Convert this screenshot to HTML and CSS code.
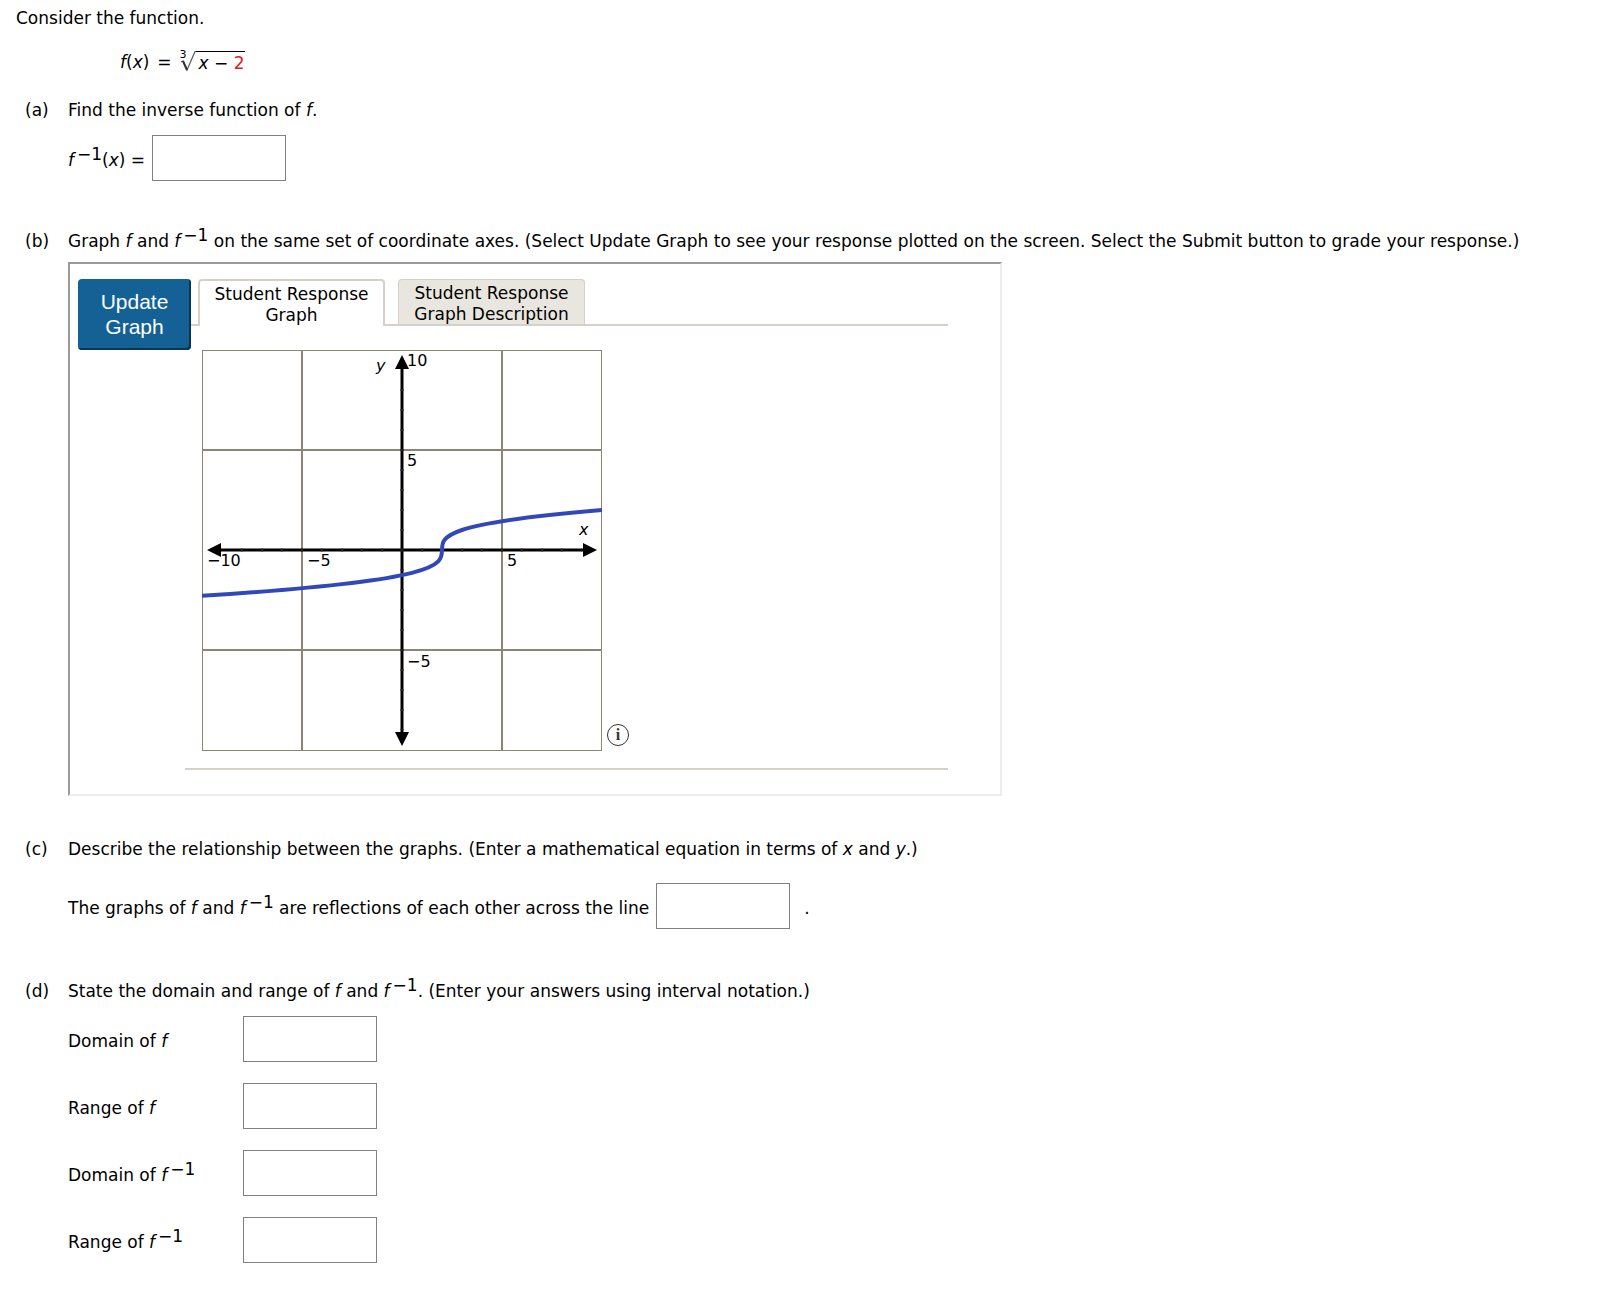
FILE: index.html
```
<!DOCTYPE html>
<html lang="en">
<head>
    <meta charset="UTF-8">
    <meta name="viewport" content="width=device-width, initial-scale=1.0">
    <title>Inverse Functions</title>
    <link rel="stylesheet" href="styles.css">
</head>
<body>
    <main class="question">
        <p>Consider the function.</p>

        <div class="formula">
            <span><i>f</i>(<i>x</i>)</span>
            <span>=</span>
            <span class="root">
                <span class="root-index">3</span>
                <svg class="root-sign" width="16" height="22" viewBox="0 0 16 22">
                    <path d="M1 12l2-1 4 9L15 1.5h1" fill="none" stroke="#555" stroke-width="1.2"/>
                    <path d="M3 11l4 9" stroke="#333" stroke-width="2"/>
                </svg>
                <span class="radicand"><i>x</i> − <span class="red">2</span></span>
            </span>
        </div>

        <section class="part part-a">
            <span>(a)</span>
            <div>
                <p>Find the inverse function of <i>f</i>.</p>
                <div class="answer-line answer-a">
                    <label for="inverse"><i>f</i><sup>−1</sup>(<i>x</i>) =</label>
                    <input type="text" id="inverse" class="answer">
                </div>
            </div>
        </section>

        <section class="part part-b">
            <span>(b)</span>
            <div>
                <p>Graph <i>f</i> and <i>f</i><sup>−1</sup> on the same set of coordinate axes. (Select Update Graph to see your response plotted on the screen. Select the Submit button to grade your response.)</p>

                <div class="graph-frame">
                    <button type="button" class="update-button">Update Graph</button>
                    <div class="graph-panel">
                        <div class="tabs">
                            <button type="button" class="tab active">Student Response Graph</button>
                            <button type="button" class="tab">Student Response Graph Description</button>
                        </div>
                        <div class="graph-body">
                            <svg class="graph" width="400" height="401" viewBox="0 0 400 401">
                                <!-- grid -->
                                <g stroke="#8b8478" fill="none">
                                    <rect x="0.5" y="0.5" width="399" height="400"/>
                                    <path d="M100 0V400M300 0V400M0 100H400M0 300H400" stroke-width="2"/>
                                </g>
                                <!-- axes -->
                                <path d="M200 16V384M16 200H384" stroke="#000" stroke-width="3"/>
                                <path d="M200 39V380M39 200H380" stroke="#222" stroke-width="3" stroke-dasharray="2 18"/>
                                <path d="M200 5l7 14h-14zM200 396l7-14h-14zM5 200l14-7v14zM395 200l-14-7v14z"/>
                                <!-- x = 2 + t^3, y = t -->
                                <path d="M0 245.8C449.7 217.2 56.8 188.6 400 160" stroke="#3348b8" stroke-width="4" fill="none"/>
                                <g class="graph-labels">
                                    <text x="205" y="16">10</text>
                                    <text x="205" y="116">5</text>
                                    <text x="205" y="317">−5</text>
                                    <text x="5" y="216">−10</text>
                                    <text x="105" y="216">−5</text>
                                    <text x="305" y="216">5</text>
                                    <text x="174" y="21" font-style="italic">y</text>
                                    <text x="377" y="185" font-style="italic">x</text>
                                </g>
                            </svg>
                            <button type="button" class="info-button">i</button>
                        </div>
                    </div>
                </div>
            </div>
        </section>

        <section class="part part-c">
            <span>(c)</span>
            <div>
                <p>Describe the relationship between the graphs. (Enter a mathematical equation in terms of <i>x</i> and <i>y</i>.)</p>
                <div class="answer-line answer-c">
                    <label for="line">The graphs of <i>f</i> and <i>f</i><sup>−1</sup> are reflections of each other across the line</label>
                    <input type="text" id="line" class="answer">
                    <span class="period">.</span>
                </div>
            </div>
        </section>

        <section class="part part-d">
            <span>(d)</span>
            <div>
                <p>State the domain and range of <i>f</i> and <i>f</i><sup>−1</sup>. (Enter your answers using interval notation.)</p>
                <div class="intervals">
                    <label for="domain-f">Domain of <i>f</i></label>
                    <input type="text" id="domain-f" class="answer">
                    <label for="range-f">Range of <i>f</i></label>
                    <input type="text" id="range-f" class="answer">
                    <label for="domain-inverse">Domain of <i>f</i><sup>−1</sup></label>
                    <input type="text" id="domain-inverse" class="answer">
                    <label for="range-inverse">Range of <i>f</i><sup>−1</sup></label>
                    <input type="text" id="range-inverse" class="answer">
                </div>
            </div>
        </section>
    </main>
</body>
</html>
```

FILE: styles.css
```
:root {
    --text-color: #000;
    --button-color: #146196;
    --tab-border: #d5d1ca;
    --tab-background: #e9e6df;
    --input-border: #808080;
}

* {
    margin: 0;
    padding: 0;
    box-sizing: border-box;
}

body {
    background: #fff;
    color: var(--text-color);
    font-family: Verdana, "DejaVu Sans", sans-serif;
    font-size: 17px;
    line-height: 20px;
}

.question {
    padding: 8px 16px;
}

sup {
    margin-left: 3px;
    font-size: 17px;
    line-height: 0;
    vertical-align: 6px;
}

/* function definition */
.formula {
    display: flex;
    gap: 8px;
    margin: 24px 0 0 104px;
    height: 20px;
}

.root {
    display: flex;
    align-items: flex-start;
}

.root-index {
    font-size: 11px;
    line-height: 6px;
    margin-right: -7px;
}

.root-sign {
    margin-top: -2px;
}

.radicand {
    margin-top: -1px;
    border-top: 1px solid #000;
    padding-left: 3px;
    line-height: 22px;
}

.red {
    color: #e01b1b;
}

/* question parts */
.part {
    display: grid;
    grid-template-columns: 43px 1fr;
    padding-left: 9px;
}

.part-a {
    margin-top: 28px;
}

.part-b {
    margin-top: 50px;
}

.part-c {
    margin-top: 43px;
}

.part-d {
    margin-top: 52px;
}

.answer-line {
    display: flex;
    align-items: center;
    gap: 7px;
}

.answer-a {
    margin-top: 15px;
}

.answer-c {
    margin-top: 24px;
}

.answer {
    width: 134px;
    height: 46px;
    padding: 0 8px;
    border: 1px solid var(--input-border);
    background: #fff;
    font: inherit;
}

.period {
    margin-left: 7px;
    padding-top: 3px;
}

label {
    padding-top: 3px;
}

.intervals {
    display: grid;
    grid-template-columns: 175px auto;
    justify-content: start;
    align-items: center;
    gap: 21px 0;
    margin-top: 15px;
}

/* graph */
.graph-frame {
    display: flex;
    align-items: flex-start;
    max-width: 934px;
    margin-top: 11px;
    padding: 15px 52px 24px 8px;
    border: 2px solid;
    border-color: #999 #ececec #ececec #999;
}

.update-button {
    position: relative;
    flex: none;
    width: 113px;
    height: 71px;
    padding-bottom: 2px;
    margin-right: -6px;
    border: 0;
    border-radius: 4px;
    box-shadow: inset -2px -2px #0c3554;
    background: var(--button-color);
    color: #fff;
    font-family: "Liberation Sans", Arial, sans-serif;
    font-size: 21px;
    line-height: 25px;
    cursor: pointer;
}

.graph-panel {
    flex: 1;
    border-bottom: 2px solid var(--tab-border);
}

.tabs {
    display: flex;
    gap: 13px;
    height: 47px;
    padding-left: 13px;
    border-bottom: 2px solid var(--tab-border);
}

.tab {
    width: 187px;
    height: 45px;
    padding-top: 3px;
    border: 1px solid var(--tab-border);
    border-bottom: 0;
    border-radius: 4px 4px 0 0;
    background: var(--tab-background);
    color: var(--text-color);
    font: inherit;
    line-height: 21px;
    cursor: pointer;
}

.tab.active {
    height: 47px;
    border-width: 2px 2px 0;
    background: #fff;
}

.graph-body {
    display: flex;
    align-items: flex-end;
    gap: 5px;
    padding: 24px 0 17px 17px;
}

.graph {
    flex: none;
}

.graph-labels {
    font-size: 16px;
}

.info-button {
    width: 22px;
    height: 22px;
    margin-bottom: 5px;
    border: 1px solid #333;
    border-radius: 50%;
    background: #fff;
    color: #333;
    font: bold 16px "Liberation Serif", serif;
    cursor: pointer;
}
```
